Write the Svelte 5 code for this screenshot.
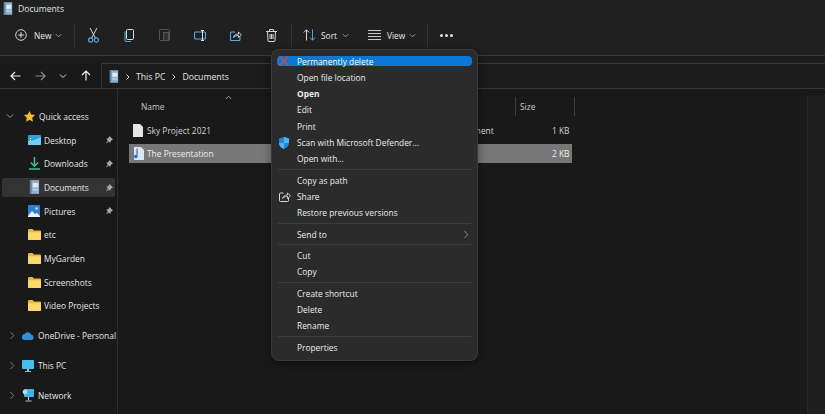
<script>
const quick = [
  { name: "Desktop", icon: "desktop", pin: true },
  { name: "Downloads", icon: "down", pin: true },
  { name: "Documents", icon: "doc", pin: true, active: true },
  { name: "Pictures", icon: "pic", pin: true },
  { name: "etc", icon: "folder" },
  { name: "MyGarden", icon: "folder" },
  { name: "Screenshots", icon: "folder" },
  { name: "Video Projects", icon: "folder" },
]

const groups = [
  [
    { label: "Permanently delete", hot: true, icon: "x" },
    { label: "Open file location" },
    { label: "Open", bold: true },
    { label: "Edit" },
    { label: "Print" },
    { label: "Scan with Microsoft Defender...", icon: "shield" },
    { label: "Open with..." },
  ],
  [
    { label: "Copy as path" },
    { label: "Share", icon: "share" },
    { label: "Restore previous versions" },
  ],
  [{ label: "Send to", more: true }],
  [{ label: "Cut" }, { label: "Copy" }],
  [{ label: "Create shortcut" }, { label: "Delete" }, { label: "Rename" }],
  [{ label: "Properties" }],
]
</script>

{#snippet docIcon(w, h)}
  <svg width={w} height={h} viewBox="0 0 12 15">
    <path d="M1 0h10v15H1z" fill="#8fb0cf" />
    <path d="M1 0h2v15H1z" fill="#5f86a8" />
    <path d="M4 3h6v5H4z" fill="#dfe8f0" />
    <path d="M4 10h6v1H4z" fill="#dfe8f0" />
  </svg>
{/snippet}

{#snippet chevron(w, color)}
  <svg width={w} height={w} viewBox="0 0 8 8">
    <path d="M1 2.5l3 3 3-3" fill="none" stroke={color} stroke-width="1" />
  </svg>
{/snippet}

{#snippet sep()}
  <svg class="crumb" width="6" height="8" viewBox="0 0 6 8">
    <path d="M1.5 1.5L4 4 1.5 6.5" fill="none" stroke="#ddd" stroke-width="1" />
  </svg>
{/snippet}

{#snippet sideIcon(kind)}
  {#if kind === "desktop"}
    <svg width="13" height="11" viewBox="0 0 13 11"><rect width="13" height="10" rx="1" fill="#2f9fd8" /><path d="M0 6c4 0 7-1 13-4v7a1 1 0 0 1-1 1H1a1 1 0 0 1-1-1z" fill="#6fd0f2" /><path d="M2 3h1v1H2zM2 5h1v1H2z" fill="#fff" /></svg>
  {:else if kind === "down"}
    <svg width="11" height="13" viewBox="0 0 11 13"><path d="M5.5 0v9M1.8 5.5l3.7 3.7 3.7-3.7" fill="none" stroke="#3fbf9c" stroke-width="1.5" /><path d="M0 12h11" stroke="#3fbf9c" stroke-width="1.5" /></svg>
  {:else if kind === "doc"}
    {@render docIcon(11, 14)}
  {:else if kind === "pic"}
    <svg width="12" height="12" viewBox="0 0 12 12"><rect width="12" height="12" rx="1" fill="#2f7fd0" /><path d="M0 11l4-5 3 3 2-1 3 3v1H0z" fill="#e8f4fc" /><circle cx="8.5" cy="3.5" r="1.2" fill="#bfe3f8" /></svg>
  {:else}
    <svg width="13" height="11" viewBox="0 0 13 11"><path d="M0 1a1 1 0 0 1 1-1h3.5l1.5 1.5h6a1 1 0 0 1 1 1V10a1 1 0 0 1-1 1H1a1 1 0 0 1-1-1z" fill="#e8b93f" /><path d="M0 3.2h13V10a1 1 0 0 1-1 1H1a1 1 0 0 1-1-1z" fill="#fbd86b" /></svg>
  {/if}
{/snippet}

{#snippet arrow(color)}
  <svg width="9" height="9" viewBox="0 0 9 9">
    <path d="M2.5 1l3.2 3.5L2.5 8" fill="none" stroke={color} stroke-width="1" />
  </svg>
{/snippet}

<div class="win">
  <header class="title">
    {@render docIcon(10, 13)}
    <span>Documents</span>
  </header>

  <div class="toolbar">
    <button class="tb new">
      <svg width="12" height="12" viewBox="0 0 12 12"><circle cx="6" cy="6" r="5.3" fill="none" stroke="#c8d4dc" /><path d="M6 3.2v5.6M3.2 6h5.6" stroke="#e6e6e6" /></svg>
      <span>New</span>
      {@render chevron(7, "#aaa")}
    </button>
    <i class="vr"></i>
    <div class="tools">
      <svg width="11" height="15" viewBox="0 0 11 15"><path d="M2 0l5.5 10M9 0L3.5 10" stroke="#d0d8de" fill="none" /><circle cx="2.6" cy="12" r="2.1" fill="none" stroke="#4fa6de" stroke-width="1.1" /><circle cx="8.4" cy="12" r="2.1" fill="none" stroke="#4fa6de" stroke-width="1.1" /></svg>
      <svg width="10" height="13" viewBox="0 0 10 13"><rect x="2.5" y=".5" width="7" height="10" rx="1" fill="none" stroke="#d8e0e6" /><path d="M1 2.5V11a1.5 1.5 0 0 0 1.5 1.5H7" fill="none" stroke="#4fa6de" stroke-width="1.1" /></svg>
      <svg width="11" height="12" viewBox="0 0 11 12"><rect x=".5" y=".5" width="10" height="11" rx="1" fill="none" stroke="#555" /><rect x="4.5" y="3.5" width="5" height="8" fill="#333" stroke="#555" /></svg>
      <svg width="13" height="11" viewBox="0 0 13 11"><rect x=".5" y="2" width="11" height="7" rx="1" fill="none" stroke="#5aaee2" stroke-width="1.1" /><path d="M8.5.5v10M7 .5h3M7 10.5h3" stroke="#e4e4e4" fill="none" /></svg>
      <svg width="12" height="11" viewBox="0 0 12 11"><path d="M5 2H1.500a1 1 0 0 0-1 1v6.500a1 1 0 0 0 1 1H9a1 1 0 0 0 1-1V7" fill="none" stroke="#5aaee2" stroke-width="1.1" /><path d="M3.500 7.500c.5-2.500 2.500-3.500 5-3.500V2l3 2.800-3 2.800V5.500c-2 0-3.500.5-5 2z" fill="none" stroke="#d8e0e6" stroke-width=".9" /></svg>
      <svg width="11" height="13" viewBox="0 0 11 13"><path d="M0 2.500h11M3.500 2.500V.5h4v2M1.500 2.500l.5 9.500a.8.8 0 0 0 .8.500h5.400a.8.8 0 0 0 .8-.5l.5-9.500M4 5v5M5.500 5v5M7 5v5" fill="none" stroke="#d6d6d6" /></svg>
    </div>
    <i class="vr"></i>
    <button class="tb sort">
      <svg width="13" height="12" viewBox="0 0 13 12"><path d="M3.500 11.500V1M.8 3.500L3.500.8l2.700 2.700" fill="none" stroke="#d8d8d8" /><path d="M9.500.5V11M6.800 8.500l2.700 2.700 2.700-2.700" fill="none" stroke="#4fa6de" /></svg>
      <span>Sort</span>
      {@render chevron(7, "#aaa")}
    </button>
    <button class="tb view">
      <svg width="13" height="10" viewBox="0 0 13 10"><path d="M0 .5h13M0 3.500h13M0 6.500h13M0 9.500h13" stroke="#c8c8c8" /></svg>
      <span>View</span>
      {@render chevron(7, "#aaa")}
    </button>
    <i class="vr"></i>
    <div class="dots"><b></b><b></b><b></b></div>
  </div>

  <div class="gap"></div>

  <nav class="addr">
    <div class="navs">
      <svg width="11" height="10" viewBox="0 0 11 10"><path d="M10.500 5H1M5 1L1 5l4 4" fill="none" stroke="#eee" stroke-width="1.2" /></svg>
      <svg width="11" height="10" viewBox="0 0 11 10"><path d="M.5 5H10M6 1l4 4-4 4" fill="none" stroke="#8a8a8a" stroke-width="1.2" /></svg>
      {@render chevron(8, "#ddd")}
      <svg width="10" height="11" viewBox="0 0 10 11"><path d="M5 10.500V1M1 5l4-4 4 4" fill="none" stroke="#eee" stroke-width="1.2" /></svg>
    </div>
    <div class="path">
      {@render docIcon(10, 13)}
      {@render sep()}
      <span>This PC</span>
      {@render sep()}
      <span>Documents</span>
    </div>
  </nav>

  <div class="body">
    <aside class="side">
      <div class="row top">
        {@render chevron(8, "#999")}
        <svg class="star" width="11" height="11" viewBox="0 0 11 11"><path d="M5.500 0l1.700 3.600 3.800.5-2.800 2.700.7 3.900-3.400-1.900-3.400 1.900.7-3.900L0 4.100l3.800-.5z" fill="#f5c02c" /></svg>
        <span>Quick access</span>
      </div>
      {#each quick as item}
        <div class="row sub" class:active={item.active}>
          <span class="ic">{@render sideIcon(item.icon)}</span>
          <span class="nm">{item.name}</span>
          {#if item.pin}
            <svg class="pin" width="8" height="8" viewBox="0 0 8 8"><path d="M4.500 0L8 3.500 6.800 4 5.500 5.500 5.300 7 3.800 5.500.8 7.800 2.800 4.500 1.200 2.800l1.500-.3L4 1.200z" fill="#a8a8a8" /></svg>
          {/if}
        </div>
      {/each}
      <div class="row root first">
        {@render arrow("#777")}
        <svg width="12" height="8" viewBox="0 0 12 8"><path d="M3 8a3 3 0 0 1-.3-6A3.500 3.500 0 0 1 9 2.500 2.800 2.800 0 0 1 9.500 8z" fill="#2f8fdc" /></svg>
        <span>OneDrive - Personal</span>
      </div>
      <div class="row root">
        {@render arrow("#777")}
        <svg width="12" height="12" viewBox="0 0 12 12"><rect width="12" height="9" rx=".8" fill="#45c0ee" /><path d="M5 9h2v2h2v1H3v-1h2z" fill="#9fb8c8" /></svg>
        <span>This PC</span>
      </div>
      <div class="row root">
        {@render arrow("#777")}
        <svg width="12" height="13" viewBox="0 0 12 13"><rect x="2" width="10" height="8" rx="1" fill="#3fb4e4" /><circle cx="3" cy="3" r="2.400" fill="#a8dcf2" /><path d="M6.500 8v3M3.500 12h6" stroke="#b8c8d4" stroke-width="1.2" /></svg>
        <span>Network</span>
      </div>
    </aside>

    <main class="list">
      <div class="heads">
        <svg class="caret" width="7" height="5" viewBox="0 0 7 5"><path d="M.8 4l2.700-2.800L6.200 4" fill="none" stroke="#9a9a9a" /></svg>
        <span class="h-name">Name</span>
        <i class="col"></i>
        <span class="h-size">Size</span>
        <i class="col"></i>
      </div>
      <div class="file">
        <svg width="10" height="13" viewBox="0 0 10 13"><path d="M0 0h7l3 3v10H0z" fill="#e4e4e4" /></svg>
        <span class="fname">Sky Project 2021</span>
        <span class="ftype">Text Document</span>
        <span class="fsize">1 KB</span>
      </div>
      <div class="file picked">
        <svg width="11" height="13" viewBox="0 0 11 13"><path d="M1 0h7l3 3v10H1z" fill="#dbe6f3" /><path d="M4 1.500v7.500" stroke="#2f6fc0" stroke-width="1.2" /><circle cx="2.800" cy="9.500" r="1.800" fill="#2f6fc0" /></svg>
        <span class="fname">The Presentation</span>
        <span class="ftype"></span>
        <span class="fsize">2 KB</span>
      </div>
    </main>

    <div class="scroll"></div>
  </div>

  <div class="menu">
    {#each groups as group, g}
      {#if g > 0}<hr />{/if}
      {#each group as item}
        <div class="item" class:hot={item.hot} class:bold={item.bold}>
          {#if item.icon === "x"}
            <svg class="mi" width="12" height="10" viewBox="0 0 12 10"><path d="M1.500 0l9 10M10.500 0l-9 10" stroke="#c0504d" stroke-width="2.2" opacity=".8" /></svg>
          {:else if item.icon === "shield"}
            <svg class="mi" width="10" height="12" viewBox="0 0 10 12"><path d="M5 0l5 1.600V6c0 3-2.400 5-5 6-2.600-1-5-3-5-6V1.600z" fill="#1f86d8" /><path d="M5 0l5 1.600V6H5zM5 6v6C2.400 11 0 9 0 6z" fill="#52b4ee" /></svg>
          {:else if item.icon === "share"}
            <svg class="mi" width="12" height="11" viewBox="0 0 12 11"><path d="M4.500 2H1.500a1 1 0 0 0-1 1v6.500a1 1 0 0 0 1 1H8.500a1 1 0 0 0 1-1V7" fill="none" stroke="#d8d8d8" /><path d="M3.500 7.500c.5-2.500 2.500-3.500 5-3.500V2l3 2.800-3 2.800V5.500c-2 0-3.500.5-5 2z" fill="none" stroke="#d8d8d8" stroke-width=".9" /></svg>
          {/if}
          <span>{item.label}</span>
          {#if item.more}<span class="more">{@render arrow("#888")}</span>{/if}
        </div>
      {/each}
    {/each}
  </div>
</div>

<style>
:global(body) {
  background: #191919;
  overflow: hidden;
}

.win {
  position: relative;
  display: flex;
  flex-direction: column;
  width: 825px;
  height: 414px;
  overflow: hidden;
  background: #191919;
  color: #e4e4e4;
  font-family: "Open Sans", "Noto Sans", sans-serif;
  font-size: 8.4px;
}

svg {
  flex: none;
  display: block;
}

.title {
  display: flex;
  align-items: center;
  gap: 5px;
  height: 17px;
  padding-left: 3px;
  background: #202020;
  font-size: 8.6px;
}

.toolbar {
  display: flex;
  align-items: center;
  height: 39px;
  padding: 0 0 2px 15px;
  box-sizing: border-box;
  background: #202020;
  border-bottom: 1px solid #383838;
}

.tb {
  display: flex;
  align-items: center;
  padding: 0;
  border: 0;
  background: none;
  color: #e8e8e8;
  font: inherit;
}

.new {
  gap: 7px;
  width: 59px;
}

.new svg:last-child {
  margin-left: -4px;
}

.sort {
  gap: 5px;
  width: 65px;
  margin-left: 11px;
}

.view {
  gap: 6px;
  width: 59px;
}

.view svg:last-child {
  margin-left: -2px;
}

.vr {
  width: 1px;
  height: 24px;
  background: #333;
}

.tools {
  display: grid;
  grid-template-columns: repeat(6, 35.5px);
  justify-items: center;
  align-items: center;
  width: 216px;
  padding-left: 1px;
  box-sizing: border-box;
}

.dots {
  display: flex;
  gap: 2px;
  margin-left: 12px;
}

.dots b {
  width: 3px;
  height: 3px;
  border-radius: 50%;
  background: #e4e4e4;
}

.gap {
  height: 7px;
  background: #1c1c1c;
  border-bottom: 1px solid #3a3a3a;
}

.addr {
  display: flex;
  height: 25px;
  box-sizing: border-box;
  background: #1b1b1b;
  border-bottom: 1px solid #383838;
}

.navs {
  display: grid;
  grid-template-columns: 26px 25px 20px 26px;
  justify-items: center;
  align-items: center;
  width: 101px;
  padding-left: 2px;
  box-sizing: border-box;
  margin-top: -1px;
  background: #191919;
}

.path {
  flex: 1;
  display: flex;
  align-items: center;
  padding: 1px 0 0 7px;
  border-left: 1px solid #333;
  font-size: 8.7px;
}

.crumb {
  margin: 0 5px 0 6px;
}

.body {
  flex: 1;
  display: flex;
  min-height: 0;
}

.side {
  width: 118px;
  box-sizing: border-box;
  padding-top: 15.5px;
  border-right: 1px solid #2e2e2e;
  white-space: nowrap;
}

.row {
  display: flex;
  align-items: center;
  height: 23.7px;
  box-sizing: border-box;
}

.row.top {
  gap: 4px;
  padding-left: 6px;
}

.star {
  margin-left: 6px;
}

.row.root {
  gap: 5px;
  height: 29.6px;
  padding-left: 8px;
}

.row.root span {
  margin-left: -1px;
}

.row.root.first {
  margin-top: 3.5px;
}

.row.sub {
  position: relative;
  padding-left: 28px;
}

.row.sub.active::before {
  content: "";
  position: absolute;
  left: 2px;
  right: 2px;
  top: 2px;
  bottom: 2px;
  background: #333;
  border-radius: 2px;
}

.ic {
  position: relative;
  display: flex;
  justify-content: center;
  width: 12px;
  margin-right: 4px;
}

.nm {
  position: relative;
}

.pin {
  position: absolute;
  right: 4px;
  top: 8px;
}

.list {
  flex: 1;
  min-width: 0;
  padding: 7px 0 0 11px;
}

.heads {
  position: relative;
  display: flex;
  align-items: center;
  width: 448px;
  height: 21px;
  margin-bottom: 3.5px;
  color: #c8c8c8;
}

.h-name {
  margin-left: 12px;
  width: 374px;
}

.h-size {
  width: 54px;
  margin-left: 4px;
}

.col {
  width: 1px;
  height: 19px;
  background: #3e3e3e;
}

.caret {
  position: absolute;
  left: 96px;
  top: -1px;
}

.file {
  display: grid;
  grid-template-columns: 12px 289px 118px 20px;
  align-items: center;
  height: 19px;
  width: 443px;
  margin-bottom: 4.5px;
  padding-left: 4px;
  box-sizing: border-box;
  color: #d4d4d4;
}

.file.picked {
  background: #777;
  color: #eee;
}

.fname {
  margin-left: 2px;
}

.scroll {
  width: 17px;
  margin-top: 6px;
  border-left: 1px solid #272727;
  background: #1e1e1e;
}

.menu {
  position: absolute;
  left: 272px;
  top: 50px;
  width: 205px;
  height: 310px;
  box-sizing: border-box;
  padding: 3px 0 4px;
  background: #2b2b2b;
  border-radius: 7px;
  box-shadow: 0 0 0 1px #3a3a3a, 0 3px 10px rgba(0, 0, 0, 0.55);
  color: #ececec;
}

.item {
  position: relative;
  display: flex;
  align-items: center;
  height: 16.25px;
  padding-left: 25px;
}

.item.hot {
  height: 10px;
  margin: 3px 5px 3.25px;
  padding-left: 20px;
  border-radius: 4px;
  background: #0a78d7;
  color: #fff;
}

.item.bold {
  font-weight: 700;
}

.mi {
  position: absolute;
  left: 7px;
  top: 2.5px;
}

.hot .mi {
  left: 1px;
  top: 0;
}

.more {
  position: absolute;
  right: 6px;
  top: 4px;
}

hr {
  height: 1px;
  margin: 2.1px 6px;
  border: 0;
  background: #3c3c3c;
}
</style>
